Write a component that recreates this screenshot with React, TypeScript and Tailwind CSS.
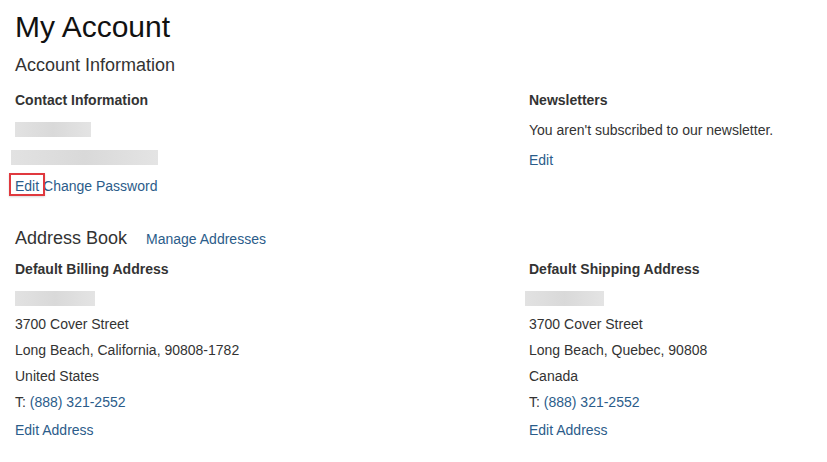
import React from "react";

const link = "text-[#2b5c8a] no-underline";

function Blur({ w, className = "" }: { w: string; className?: string }) {
  return (
    <div
      className={`h-[15px] bg-gradient-to-r from-[#e2e2e2] via-[#d9d9d9] to-[#e4e4e4] ${w} ${className}`}
    />
  );
}

function AddressBlock({
  title,
  blurW,
  lines,
}: {
  title: string;
  blurW: string;
  lines: string[];
}) {
  return (
    <div>
      <div className="font-bold leading-[26px]">{title}</div>
      <Blur w={blurW} className="mt-[9px] -ml-[4px] h-[14px]" />
      <div className="mt-[5px]">
        {lines.map((l) => (
          <div key={l} className="leading-[26px]">
            {l}
          </div>
        ))}
        <div className="leading-[26px]">
          T: <a className={link}>(888) 321-2552</a>
        </div>
        <div className="mt-[2px] leading-[26px]">
          <a className={link}>Edit Address</a>
        </div>
      </div>
    </div>
  );
}

export default function App() {
  return (
    <div
      className="min-h-[462px] w-[827px] bg-white pl-[15px] text-[14px] text-[#333]"
      style={{ fontFamily: '"Liberation Sans", Arial, sans-serif' }}
    >
      <h1 className="pt-[12px] text-[30px] leading-[30px] text-[#111]">
        My Account
      </h1>
      <h2 className="mt-[14px] text-[18px] leading-[18px]">
        Account Information
      </h2>

      {/* account info */}
      <div className="mt-[13px] grid grid-cols-[514px_1fr]">
        <div>
          <div className="font-bold leading-[26px]">Contact Information</div>
          <Blur w="w-[76px]" className="mt-[9px]" />
          <Blur w="w-[147px]" className="mt-[13px] -ml-[4px]" />
          <div className="mt-[8px] leading-[26px]">
            <span className="relative">
              <a className={link}>Edit</a>
              <span className="absolute -left-[6px] -top-[5px] h-[23px] w-[36px] border-2 border-[#e0393e] shadow-[0_1px_2px_rgba(0,0,0,0.15)]" />
            </span>{" "}
            <a className={link}>Change Password</a>
          </div>
        </div>
        <div>
          <div className="font-bold leading-[26px]">Newsletters</div>
          <div className="mt-[4px] leading-[26px]">
            You aren't subscribed to our newsletter.
          </div>
          <div className="mt-[4px] leading-[26px]">
            <a className={link}>Edit</a>
          </div>
        </div>
      </div>

      {/* address book */}
      <div className="mt-[30px] flex items-baseline">
        <h2 className="text-[18px] leading-[18px]">Address Book</h2>
        <a className={`${link} ml-[19px]`}>Manage Addresses</a>
      </div>
      <div className="mt-[6px] grid grid-cols-[514px_1fr]">
        <AddressBlock
          title="Default Billing Address"
          blurW="w-[80px] ml-0"
          lines={[
            "3700 Cover Street",
            "Long Beach, California, 90808-1782",
            "United States",
          ]}
        />
        <AddressBlock
          title="Default Shipping Address"
          blurW="w-[79px]"
          lines={["3700 Cover Street", "Long Beach, Quebec, 90808", "Canada"]}
        />
      </div>
    </div>
  );
}
